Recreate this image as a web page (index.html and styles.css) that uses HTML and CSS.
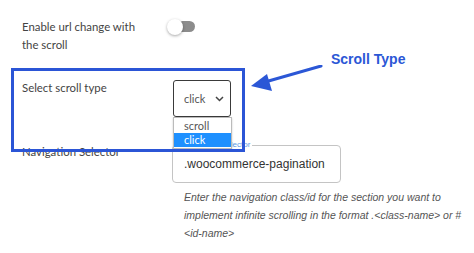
FILE: index.html
```html
<!DOCTYPE html>
<html>
<head>
<meta charset="utf-8">
<link rel="stylesheet" href="styles.css">
</head>
<body>
<div class="page">
  <div class="form">
    <div class="row r1">
      <div class="label">Enable url change with<br>the scroll</div>
      <div class="control"><div class="toggle"><span class="knob"></span></div></div>
    </div>
    <div class="row r2">
      <div class="label">Select scroll type</div>
      <div class="control">
        <div class="select"><span>click</span>
          <svg class="chev" width="9" height="6" viewBox="0 0 9 6"><path d="M1 1l3.5 3.5L8 1" fill="none" stroke="#444" stroke-width="1.5"/></svg>
        </div>
      </div>
    </div>
    <div class="row r3">
      <div class="label">Navigation Selector</div>
      <div class="control">
        <div class="field"><span class="legend">Navigation Selector</span><span class="value">.woocommerce-pagination</span></div>
      </div>
    </div>
    <p class="help">Enter the navigation class/id for the section you want to implement infinite scrolling in the format .&lt;class-name&gt; or #&lt;id-name&gt;</p>
  </div>

  <ul class="dropdown">
    <li>scroll</li>
    <li class="active">click</li>
  </ul>

  <div class="highlight"></div>
  <svg class="arrow" width="80" height="30" viewBox="0 0 80 30">
    <line x1="70" y1="1" x2="14" y2="17" stroke="#2b57d6" stroke-width="3" stroke-linecap="round"/>
    <polygon points="0,21 16,9 21,26" fill="#2b57d6"/>
  </svg>
  <div class="callout">Scroll Type</div>
</div>
</body>
</html>
```
FILE: styles.css
```css
* { box-sizing: border-box; }
html, body { margin: 0; padding: 0; background: #fff; }
.page { position: relative; width: 474px; height: 253px; overflow: hidden; }

.form { padding: 18px 0 0 22px; font-family: Lato, "Open Sans", sans-serif; color: #444; }
.row { display: grid; grid-template-columns: 150px auto; align-items: start; }
.label { font-size: 11.4px; line-height: 18px; color: #444; }

.toggle { position: relative; width: 28px; height: 16px; margin-left: -5px; margin-top: 1px; }
.toggle::before { content: ""; position: absolute; left: 10px; top: 2px; width: 18px; height: 11px; border-radius: 6px; background: #8c8c8c; }
.knob { position: absolute; left: 0; top: 0; width: 16px; height: 16px; border-radius: 50%; background: #fff; box-shadow: 0 1px 3px rgba(0,0,0,0.35); }

.r2 { margin-top: 25px; }
.select { display: flex; align-items: center; justify-content: space-between; width: 58px; height: 37px; margin-left: 1px; margin-top: 1px; border: 1px solid #3a3a3a; border-radius: 3px; padding: 0 6px 0 10px; font-size: 11px; color: #555; }
.chev { margin-top: 1px; }

.r3 { margin-top: 26px; }
.field { position: relative; width: 169px; height: 38px; margin-top: 2px; border: 1px solid #c4c4c4; border-radius: 4px; display: flex; align-items: center; padding-left: 11px; font-family: "Liberation Sans", Arial, sans-serif; font-size: 12px; color: #333; }
.legend { position: absolute; left: 6px; top: -6px; padding: 0 2px; background: #fff; font-size: 8px; line-height: 10px; color: #5b9be6; font-family: "Liberation Sans", Arial, sans-serif; }

.help { margin: 5px 0 0 162px; width: 285px; font-family: "Liberation Sans", Arial, sans-serif; font-style: italic; font-size: 10.5px; line-height: 18px; color: #555; }

.dropdown { position: absolute; left: 173px; top: 117px; width: 59px; margin: 0; padding: 1px 0; list-style: none; background: #fff; border: 1px solid #bbb; box-shadow: 0 1px 2px rgba(0,0,0,0.2); font-family: Lato, sans-serif; font-size: 11px; color: #555; }
.dropdown li { height: 14px; line-height: 14px; padding-left: 10px; }
.dropdown li.active { background: #1e90ff; color: #fff; }

.highlight { position: absolute; left: 11px; top: 68px; width: 234px; height: 84px; border: 3px solid #2b55d6; }
.arrow { position: absolute; left: 251px; top: 65px; }
.callout { position: absolute; left: 331px; top: 51px; font-family: "Liberation Sans", Arial, sans-serif; font-weight: bold; font-size: 14px; color: #2b57d6; }
```
